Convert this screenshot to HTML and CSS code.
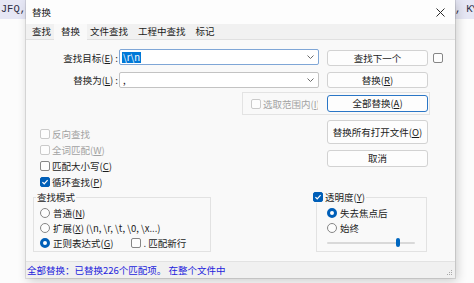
FILE: index.html
```html
<!DOCTYPE html>
<html lang="zh-CN">
<head>
<meta charset="utf-8">
<title>替换</title>
<link rel="stylesheet" href="styles.css">
</head>
<body>
<div class="editor">
  <div class="line"><span class="l"><span>JFQ,</span></span><span class="r">, KY</span></div>
</div>
<div class="dialog">
  <div class="titlebar">
    <span class="title">替换</span>
    <svg class="close" width="9" height="9" viewBox="0 0 9 9"><path d="M0.5 0.5L8.5 8.5M8.5 0.5L0.5 8.5" stroke="#2b2b2b" stroke-width="1" fill="none"/></svg>
  </div>
  <div class="tabs">
    <span class="tab">查找</span><span class="tab active">替换</span><span class="tab">文件查找</span><span class="tab">工程中查找</span><span class="tab">标记</span>
  </div>
  <div class="top">
    <div class="lbl row1">查找目标(<u>E</u>) :</div>
    <div class="combo focus row1"><span class="seltext">\r\n</span><svg class="chev" width="7" height="4" viewBox="0 0 7 4"><polyline points="0.5,0.5 3.5,3.5 6.5,0.5" stroke="#6a6a6a" fill="none"/></svg></div>
    <div class="btn row1">查找下一个</div>
    <span class="box side row1"></span>

    <div class="lbl row2">替换为(<u>L</u>) :</div>
    <div class="combo row2"><span class="val">,</span><svg class="chev" width="7" height="4" viewBox="0 0 7 4"><polyline points="0.5,0.5 3.5,3.5 6.5,0.5" stroke="#6a6a6a" fill="none"/></svg></div>
    <div class="btn row2">替换(<u>R</u>)</div>

    <div class="frame">
      <span class="box dis"></span><span class="clip dtext">选取范围内(<u>I</u>)</span>
      <div class="btn def">全部替换(<u>A</u>)</div>
    </div>

    <div class="opts">
      <div class="opt dtext"><span class="box dis"></span>反向查找</div>
      <div class="opt dtext"><span class="box dis"></span>全词匹配(<u>W</u>)</div>
      <div class="opt"><span class="box"></span>匹配大小写(<u>C</u>)</div>
      <div class="opt"><span class="box on"><svg width="8" height="8" viewBox="0 0 8 8"><polyline points="1.4,4.1 3.2,5.8 6.6,2.2" stroke="#fff" stroke-width="1.2" fill="none"/></svg></span>循环查找(<u>P</u>)</div>
    </div>

    <div class="btn row4">替换所有打开文件(<u>O</u>)</div>
    <div class="btn row5">取消</div>
  </div>

  <div class="bottom">
    <fieldset class="grp mode">
      <legend>查找模式</legend>
      <div class="inner">
        <div class="opt r"><span class="radio"></span>普通(<u>N</u>)</div>
        <div class="opt r"><span class="radio"></span>扩展(<u>X</u>) (\n, \r, \t, \0, \x...)</div>
        <div class="opt r"><span class="radio on"></span>正则表达式(<u>G</u>)<span class="box nl"></span>. 匹配新行</div>
      </div>
    </fieldset>
    <fieldset class="grp trans">
      <legend><span class="box on"><svg width="8" height="8" viewBox="0 0 8 8"><polyline points="1.4,4.1 3.2,5.8 6.6,2.2" stroke="#fff" stroke-width="1.2" fill="none"/></svg></span>透明度(<u>Y</u>)</legend>
      <div class="inner">
        <div class="opt r"><span class="radio on"></span>失去焦点后</div>
        <div class="opt r"><span class="radio"></span>始终</div>
        <div class="slider"><span class="track"></span><span class="thumb"></span></div>
      </div>
    </fieldset>
  </div>

  <div class="status">全部替换：已替换226个匹配项。 在整个文件中
    <svg class="grip" width="7" height="7" viewBox="0 0 7 7"><g fill="#a8a8a8"><rect x="5" y="0" width="1" height="1"/><rect x="3" y="2" width="1" height="1"/><rect x="5" y="2" width="1" height="1"/><rect x="1" y="4" width="1" height="1"/><rect x="3" y="4" width="1" height="1"/><rect x="5" y="4" width="1" height="1"/></g></svg>
  </div>
</div>
</body>
</html>
```
FILE: styles.css
```css
* { box-sizing: border-box; }
html, body { margin: 0; }
body {
  width: 474px; height: 283px; overflow: hidden; position: relative;
  background: #fbfbfb;
  font-family: "Noto Sans CJK SC", "Noto Sans", sans-serif;
  font-size: 9.5px; line-height: 12px; color: #1b1b1b;
}
u { text-decoration: underline; text-underline-offset: 1px; }

.editor { height: 283px; background: #fcfcfc; }
.line {
  height: 19px; background: #e6e7f5; display: flex; overflow: hidden;
  font-family: "Liberation Mono", monospace; font-size: 10.5px; line-height: 19px; color: #2e2e46;
}
.line .l { flex: none; width: 26px; display: flex; justify-content: flex-end; overflow: hidden; white-space: nowrap; }
.line .r { flex: none; margin-left: 429px; white-space: nowrap; letter-spacing: -0.7px; }

.dialog {
  position: absolute; left: 26px; top: 0; width: 429px; height: 278px;
  background: #f9f9f9; display: flex; flex-direction: column;
  box-shadow: 0 0 0 1px rgba(0,0,0,.10), 2px 3px 10px rgba(0,0,0,.20);
}
.titlebar {
  height: 24px; background: #fdfdfd; display: flex; align-items: center;
  justify-content: space-between; padding: 0 10px 0 6px;
}
.tabs {
  height: 16px; background: #f1f1f1; border-bottom: 1px solid #e0e0e0;
  display: flex; padding-left: 1px; line-height: 15px;
}
.tab { padding: 0 5px; }
.tab.active { background: #f9f9f9; padding: 0 7px; margin: 0 -2px -1px; height: 16px; }

.top {
  display: grid; padding: 9px 0 0 7px;
  grid-template-columns: 86px 200px 8px 101px 5px 10px;
  grid-template-rows: 17px 16px 20px 24px 17px;
  row-gap: 6px;
}
.lbl { grid-column: 1; text-align: right; padding-right: 1px; align-self: center; white-space: nowrap; }
.row1 { grid-row: 1; }
.row2 { grid-row: 2; }
.combo {
  grid-column: 2; height: 16px; background: #fff; border: 1px solid #c3c3c3;
  border-radius: 2px; display: flex; align-items: center; padding-left: 2px;
}
.combo.row1 { align-self: start; }
.combo.focus { border-color: #7fa6d6; }
.seltext { background: #0078d7; color: #fff; line-height: 11px; padding: 0 1px; }
.val { padding-left: 1px; }
.chev { margin-left: auto; margin-right: 4px; }

.btn {
  grid-column: 4; height: 17px; border: 1px solid #d2d2d2; border-radius: 3px;
  background: #fdfdfd; text-align: center; line-height: 15px; white-space: nowrap;
  align-self: center;
}
.btn.row1 { height: 16px; align-self: end; }
.btn.row2 { height: 16px; }
.btn.def { border-color: #2a76c6; }
.btn.row4 { grid-row: 4; height: 24px; line-height: 22px; }
.btn.row5 { grid-row: 5; }

.box {
  width: 10px; height: 10px; border: 1px solid #868686; border-radius: 2px;
  background: #fdfdfd; display: inline-flex; align-items: center; justify-content: center;
  flex: none; margin-right: 2px;
}
.box.dis { border-color: #cacaca; }
.box.on { background: #005fb8; border-color: #005fb8; }
.box.side { grid-column: 6; align-self: center; margin-top: 1px; }
.radio {
  width: 10px; height: 10px; border: 1px solid #868686; border-radius: 50%;
  background: #fdfdfd; flex: none; margin-right: 3px;
}
.radio.on { border: 3px solid #005fb8; background: #fff; }
.dtext { color: #a2a2a2; }

.frame {
  grid-column: 2 / 5; grid-row: 3; margin: -2px -2px 0 123px; height: 23px;
  border: 1px solid #e3e3e3; display: flex; align-items: center; padding: 0 1px 0 8px;
}
.frame .clip { width: 55px; overflow: hidden; white-space: nowrap; }
.frame .btn { margin-left: auto; width: 101px; }

.opts { grid-column: 1 / 3; grid-row: 4 / 6; align-self: start; margin: 6px 0 0 7px; }
.opt { display: flex; align-items: center; height: 16px; white-space: nowrap; }
.opt.r { height: 15px; }

.bottom { display: flex; margin-top: 24px; }
.grp { margin: 0; padding: 0; border: 1px solid #e2e2e2; min-width: 0; }
.grp legend { padding: 0 1px; line-height: 12px; display: flex; align-items: center; }
.mode { margin-left: 7px; width: 178px; }
.mode legend { margin-left: 2px; }
.mode .inner { padding: 2px 0 1px 6px; }
.nl { margin-left: 18px; }
.trans { margin-left: 105px; width: 111px; }
.trans legend { margin-left: -5px; }
.trans .inner { padding: 2px 0 1px 10px; }
.slider { position: relative; width: 88px; height: 15px; }
.track { position: absolute; left: 0; right: 0; top: 7px; height: 2px; background: #d9d9d9; border-radius: 1px; }
.thumb { position: absolute; left: 69px; top: 3px; width: 4px; height: 9px; background: #0067c0; border-radius: 2px; }

.status {
  margin-top: auto; height: 17px; border-top: 1px solid #e2e2e2; background: #f0f0f0;
  padding-left: 1px; color: #2323dc; line-height: 16px; position: relative; white-space: nowrap;
}
.grip { position: absolute; right: 2px; bottom: 1px; }
```
